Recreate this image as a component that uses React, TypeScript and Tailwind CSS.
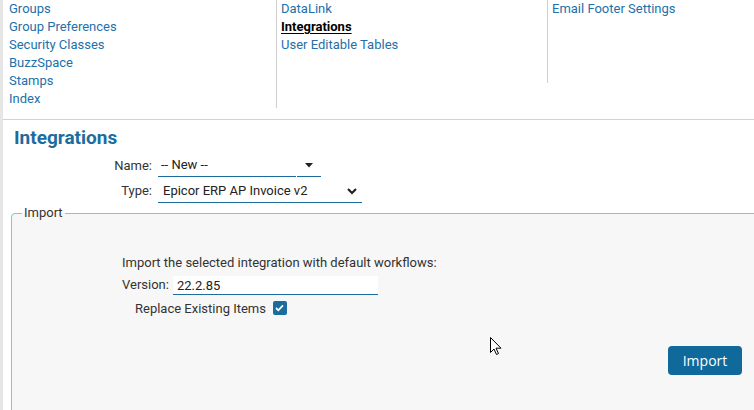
import React from "react";

const linkCls = "block h-[18px] leading-[18px] text-[13px] text-[#2370a8] whitespace-nowrap";

export default function App() {
  return (
    <div
      className="relative w-[754px] h-[410px] overflow-hidden bg-white border-l-[3px] border-[#e6e6e6] text-[#333]"
      style={{ fontFamily: "Roboto, 'Liberation Sans', sans-serif" }}
    >
      {/* top nav */}
      <div className="flex h-[120px] border-b border-[#d2d2d2]">
        <div className="w-[273px] pl-[6px]">
          <a className={linkCls}>Groups</a>
          <a className={linkCls}>Group Preferences</a>
          <a className={linkCls}>Security Classes</a>
          <a className={linkCls}>BuzzSpace</a>
          <a className={linkCls}>Stamps</a>
          <a className={linkCls}>Index</a>
        </div>
        <div className="w-[271px] h-[109px] border-l border-[#cfcfcf] pl-[4px] -mt-[1px] pt-[1px]">
          <a className={linkCls}>DataLink</a>
          <a className="block h-[18px] leading-[18px] text-[13px] text-black font-bold underline underline-offset-2">Integrations</a>
          <a className={linkCls}>User Editable Tables</a>
        </div>
        <div className="h-[84px] border-l border-[#cfcfcf] pl-[4px] -mt-[1px] pt-[1px]">
          <a className={linkCls}>Email Footer Settings</a>
        </div>
      </div>

      {/* heading */}
      <h1 className="pl-[11px] pt-[6px] h-[32px] text-[19px] leading-[24px] font-bold text-[#1d6c9e]">Integrations</h1>

      {/* name / type */}
      <div className="flex flex-col gap-[2px] pt-[2px]">
        <div className="flex items-end h-[23px]">
          <span className="w-[149px] text-right text-[13px] leading-[20px] pb-[1px]">Name:</span>
          <div className="ml-[6px] flex h-[22px]">
            <div className="w-[138px] border-b border-[#1d6c9e] pl-[3px] text-[13px] leading-[20px] text-[#222]">-- New --</div>
            <div className="ml-[1px] w-[24px] border-b border-[#1d6c9e] flex items-center justify-center">
              <svg width="8" height="5" viewBox="0 0 8 5"><path d="M0 0h8L4 4.5z" fill="#222" /></svg>
            </div>
          </div>
        </div>
        <div className="flex items-end h-[24px]">
          <span className="w-[149px] text-right text-[13px] leading-[20px] pb-[2px]">Type:</span>
          <div className="ml-[6px] w-[204px] h-[23px] border-b-[1.5px] border-[#1d6c9e] flex items-center justify-between pl-[5px] pr-[5px]">
            <span className="text-[13px] text-[#222]">Epicor ERP AP Invoice v2</span>
            <svg width="10" height="7" viewBox="0 0 10 7"><path d="M1 1l4 4 4-4" stroke="#222" strokeWidth="2.2" fill="none" /></svg>
          </div>
        </div>
      </div>

      {/* fieldset */}
      <fieldset className="mt-[2px] ml-[8px] w-[760px] h-[220px] border border-[#8fc0cd] rounded-tl-[4px] bg-[#f7f7f7] relative">
        <legend className="ml-[10px] px-[2px] text-[13px] leading-[16px] text-[#333]">Import</legend>
        <div className="pl-[110px] pt-[32px]">
          <div className="text-[13px] leading-[20px]">Import the selected integration with default workflows:</div>
          <div className="flex items-center h-[22px] mt-[1px]">
            <span className="text-[13px]">Version:</span>
            <div className="ml-[4px] w-[205px] h-[19px] bg-white border-b border-[#1d6c9e] pl-[4px] text-[13px] leading-[19px] text-[#222]">22.2.85</div>
          </div>
          <div className="flex items-center h-[26px] pl-[13px]">
            <span className="text-[13px]">Replace Existing Items</span>
            <span className="ml-[7px] w-[14px] h-[14px] rounded-[2px] bg-[#1d6c9e] flex items-center justify-center mb-[3px]">
              <svg width="9" height="8" viewBox="0 0 9 8"><path d="M1 4l2.3 2.3L8 1.3" stroke="white" strokeWidth="1.8" fill="none" /></svg>
            </span>
          </div>
        </div>
        <div className="absolute left-[656px] top-[125px]">
          <button className="w-[74px] h-[29px] rounded-[4px] bg-[#0f6a9b] text-white text-[14px]" style={{ fontFamily: "'Open Sans', 'Noto Sans', sans-serif" }}>Import</button>
        </div>
      </fieldset>

      {/* mouse cursor */}
      <svg className="absolute left-[487px] top-[337px]" width="12" height="19" viewBox="0 0 12 19">
        <path d="M0.5 0.5v15l3.5-3.5 2.5 5.5 2-1-2.5-5.3h5z" fill="white" stroke="black" strokeWidth="1" />
      </svg>
    </div>
  );
}
